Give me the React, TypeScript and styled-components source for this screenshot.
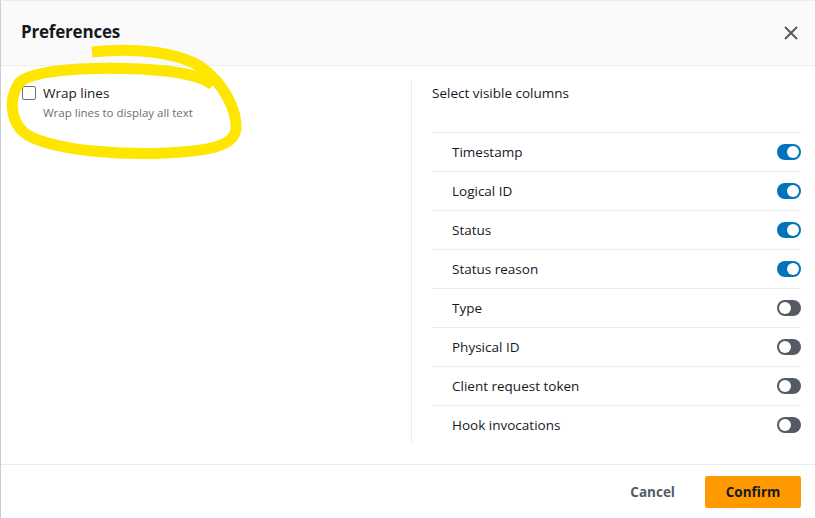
import { useState } from "react";
import styled, { createGlobalStyle } from "styled-components";

const GlobalStyle = createGlobalStyle`
  html, body {
    margin: 0;
    padding: 0;
    background: #ffffff;
  }
  body {
    font-family: "Open Sans", "Noto Sans", Arial, sans-serif;
    color: #16191f;
  }
`;

const Modal = styled.div`
  position: relative;
  width: 815px;
  height: 518px;
  box-sizing: border-box;
  border-left: 1px solid #c9cfd1;
  border-top: 1px solid #eaeded;
  display: flex;
  flex-direction: column;
  background: #ffffff;
  overflow: hidden;
`;

const Header = styled.header`
  height: 65px;
  flex-shrink: 0;
  background: #fafafa;
  border-bottom: 1px solid #eaeded;
  display: flex;
  align-items: center;
  justify-content: space-between;
  padding: 0 12px 3px 20px;
  box-sizing: border-box;
`;

const Title = styled.h2`
  margin: 0;
  font-size: 17px;
  font-weight: 700;
  letter-spacing: -0.2px;
  color: #16191f;
`;

const CloseButton = styled.button`
  width: 24px;
  height: 24px;
  padding: 0;
  margin-top: 3px;
  border: none;
  background: none;
  color: #545b64;
  display: flex;
  align-items: center;
  justify-content: center;
  cursor: pointer;
`;

const Body = styled.div`
  flex: 1;
  display: grid;
  grid-template-columns: 391px 1fr;
  padding: 14px 14px 20px 20px;
  align-items: stretch;
`;

const LeftColumn = styled.div`
  border-right: 1px solid #eaeded;
  padding-top: 3px;
`;

const RightColumn = styled.div`
  padding-left: 20px;
  padding-top: 3px;
  display: flex;
  flex-direction: column;
`;

const CheckRow = styled.label`
  display: flex;
  gap: 7px;
  cursor: pointer;
`;

const CheckBox = styled.span<{ $checked: boolean }>`
  width: 14px;
  height: 14px;
  margin-top: 3px;
  margin-left: 1px;
  box-sizing: border-box;
  border: 1px solid #687078;
  border-radius: 2px;
  background: ${(p) => (p.$checked ? "#0073bb" : "#fff")};
  flex-shrink: 0;
`;

const CheckText = styled.div`
  display: flex;
  flex-direction: column;
`;

const Label = styled.span`
  font-size: 13.5px;
  line-height: 20px;
  color: #16191f;
`;

const Hint = styled.span`
  font-size: 11.5px;
  line-height: 20px;
  color: #687078;
`;

const SectionTitle = styled.div`
  font-size: 13.5px;
  line-height: 20px;
  margin-bottom: 29px;
`;

const ColumnRow = styled.div`
  height: 39px;
  box-sizing: border-box;
  border-top: 1px solid #eaeded;
  padding-left: 20px;
  display: flex;
  align-items: center;
  justify-content: space-between;
  font-size: 13.5px;
`;

const Track = styled.button<{ $on: boolean }>`
  width: 24px;
  height: 16px;
  padding: 0;
  border: none;
  border-radius: 8px;
  background: ${(p) => (p.$on ? "#0073bb" : "#545b64")};
  position: relative;
  cursor: pointer;
  &::after {
    content: "";
    position: absolute;
    top: 2px;
    left: ${(p) => (p.$on ? "10px" : "2px")};
    width: 12px;
    height: 12px;
    border-radius: 50%;
    background: #ffffff;
  }
`;

const Footer = styled.footer`
  height: 53px;
  flex-shrink: 0;
  border-top: 1px solid #eaeded;
  display: flex;
  align-items: center;
  justify-content: flex-end;
  padding: 0 14px 0 0;
  gap: 10px;
`;

const TextButton = styled.button`
  border: none;
  background: none;
  font-family: inherit;
  font-size: 13.5px;
  font-weight: 700;
  color: #545b64;
  padding: 4px 20px;
  cursor: pointer;
`;

const PrimaryButton = styled.button`
  width: 96px;
  height: 32px;
  border: none;
  border-radius: 2px;
  background: #ff9900;
  font-family: inherit;
  font-size: 13.5px;
  font-weight: 700;
  color: #16191f;
  cursor: pointer;
`;

const Scribble = styled.svg`
  position: absolute;
  left: 0;
  top: 0;
  pointer-events: none;
`;

const initialColumns = [
  { label: "Timestamp", on: true },
  { label: "Logical ID", on: true },
  { label: "Status", on: true },
  { label: "Status reason", on: true },
  { label: "Type", on: false },
  { label: "Physical ID", on: false },
  { label: "Client request token", on: false },
  { label: "Hook invocations", on: false },
];

const App = () => {
  const [wrap, setWrap] = useState(false);
  const [columns, setColumns] = useState(initialColumns);

  const toggle = (i: number) =>
    setColumns(columns.map((c, j) => (j === i ? { ...c, on: !c.on } : c)));

  return (
    <>
      <GlobalStyle />
      <Modal>
        <Header>
          <Title>Preferences</Title>
          <CloseButton aria-label="Close">
            <svg width="16" height="16" viewBox="0 0 16 16">
              <path d="M2 2 L14 14 M14 2 L2 14" stroke="currentColor" strokeWidth="2" fill="none" />
            </svg>
          </CloseButton>
        </Header>
        <Body>
          <LeftColumn>
            <CheckRow onClick={() => setWrap(!wrap)}>
              <CheckBox $checked={wrap} />
              <CheckText>
                <Label>Wrap lines</Label>
                <Hint>Wrap lines to display all text</Hint>
              </CheckText>
            </CheckRow>
          </LeftColumn>
          <RightColumn>
            <SectionTitle>Select visible columns</SectionTitle>
            {columns.map((c, i) => (
              <ColumnRow key={c.label}>
                <span>{c.label}</span>
                <Track $on={c.on} onClick={() => toggle(i)} aria-label={c.label} />
              </ColumnRow>
            ))}
          </RightColumn>
        </Body>
        <Footer>
          <TextButton>Cancel</TextButton>
          <PrimaryButton>Confirm</PrimaryButton>
        </Footer>
        <Scribble width="260" height="170" viewBox="0 0 260 170">
          <path
            d="M91 51 C130 47 175 50 200 66 C222 82 236 108 235 128 C233 146 205 150 165 152 C120 154 60 150 30 136 C10 126 6 100 18 82 C32 68 90 66 140 68 C175 70 200 74 212 84"
            stroke="#ffe600"
            strokeWidth="11"
            strokeLinecap="butt"
            fill="none"
          />
        </Scribble>
      </Modal>
    </>
  );
};

export default App;
